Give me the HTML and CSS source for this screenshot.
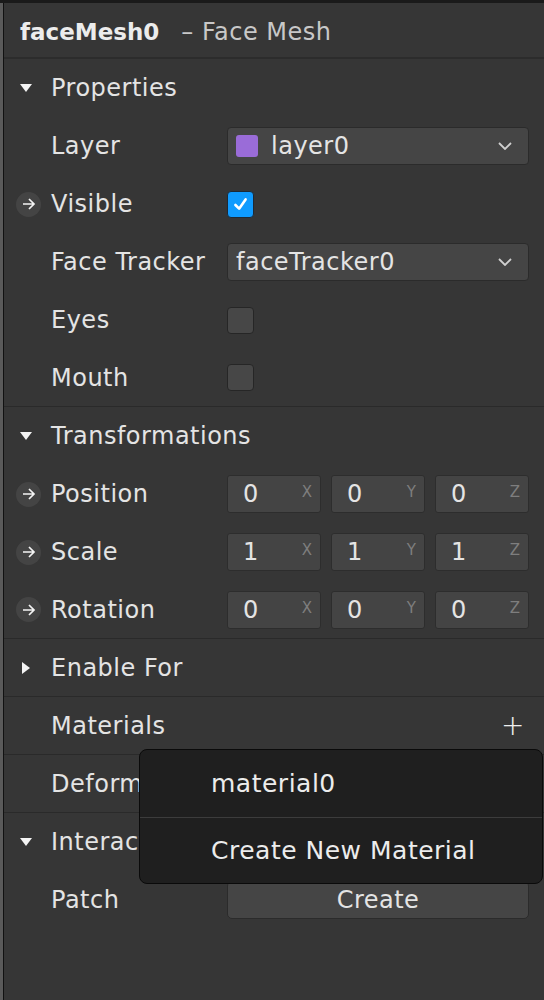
FILE: index.html
```html
<!DOCTYPE html>
<html lang="en">
  <head>
    <meta charset="UTF-8" />
    <meta name="viewport" content="width=device-width, initial-scale=1.0" />
    <title>Inspector</title>
    <link rel="stylesheet" href="styles.css">
  </head>
  <body>
    <!-- icons -->
    <svg display="none">
      <symbol id="chevron" viewBox="0 0 14 8">
        <path d="M1,1 L7,7 L13,1" fill="none" stroke="#d0d0d0" stroke-width="1.8"></path>
      </symbol>
      <symbol id="link-arrow" viewBox="0 0 14 12">
        <path d="M1,6 H12 M7,1 L12,6 L7,11" fill="none" stroke="#f4f4f4" stroke-width="1.7"></path>
      </symbol>
    </svg>

    <div class="frame">
      <div class="edge"></div>

      <div class="panel">
        <!-- header -->
        <div class="header">
          <span class="title">faceMesh0</span>
          <span class="subtitle">– Face Mesh</span>
        </div>

        <!-- Properties -->
        <div class="section">
          <div class="row">
            <div class="lead"><span class="tri tri-down"></span></div>
            <div class="label">Properties</div>
          </div>
          <div class="row">
            <div class="lead"></div>
            <div class="label">Layer</div>
            <div class="control select">
              <span class="swatch"></span>
              <span class="select-text">layer0</span>
              <svg class="chevron"><use href="#chevron"></use></svg>
            </div>
          </div>
          <div class="row">
            <div class="lead"><span class="link"><svg><use href="#link-arrow"></use></svg></span></div>
            <div class="label">Visible</div>
            <div class="control">
              <span class="check checked">
                <svg viewBox="0 0 27 27"><path d="M8,14 L12,18 L19,8" fill="none" stroke="#fff" stroke-width="2.8" stroke-linecap="round" stroke-linejoin="round"></path></svg>
              </span>
            </div>
          </div>
          <div class="row">
            <div class="lead"></div>
            <div class="label">Face Tracker</div>
            <div class="control select">
              <span class="select-text plain">faceTracker0</span>
              <svg class="chevron"><use href="#chevron"></use></svg>
            </div>
          </div>
          <div class="row">
            <div class="lead"></div>
            <div class="label">Eyes</div>
            <div class="control"><span class="check"></span></div>
          </div>
          <div class="row">
            <div class="lead"></div>
            <div class="label">Mouth</div>
            <div class="control"><span class="check"></span></div>
          </div>
        </div>

        <!-- Transformations -->
        <div class="section">
          <div class="row">
            <div class="lead"><span class="tri tri-down"></span></div>
            <div class="label">Transformations</div>
          </div>
          <div class="row">
            <div class="lead"><span class="link"><svg><use href="#link-arrow"></use></svg></span></div>
            <div class="label">Position</div>
            <div class="control vec">
              <div class="field"><span>0</span><i>X</i></div>
              <div class="field"><span>0</span><i>Y</i></div>
              <div class="field"><span>0</span><i>Z</i></div>
            </div>
          </div>
          <div class="row">
            <div class="lead"><span class="link"><svg><use href="#link-arrow"></use></svg></span></div>
            <div class="label">Scale</div>
            <div class="control vec">
              <div class="field"><span>1</span><i>X</i></div>
              <div class="field"><span>1</span><i>Y</i></div>
              <div class="field"><span>1</span><i>Z</i></div>
            </div>
          </div>
          <div class="row">
            <div class="lead"><span class="link"><svg><use href="#link-arrow"></use></svg></span></div>
            <div class="label">Rotation</div>
            <div class="control vec">
              <div class="field"><span>0</span><i>X</i></div>
              <div class="field"><span>0</span><i>Y</i></div>
              <div class="field"><span>0</span><i>Z</i></div>
            </div>
          </div>
        </div>

        <div class="section">
          <div class="row">
            <div class="lead"><span class="tri tri-right"></span></div>
            <div class="label">Enable For</div>
          </div>
        </div>

        <div class="section">
          <div class="row">
            <div class="lead"></div>
            <div class="label">Materials</div>
            <div class="plus">+</div>
          </div>
        </div>

        <div class="section">
          <div class="row">
            <div class="lead"></div>
            <div class="label">Deformation</div>
          </div>
        </div>

        <div class="section last">
          <div class="row">
            <div class="lead"><span class="tri tri-down"></span></div>
            <div class="label">Interactions</div>
          </div>
          <div class="row">
            <div class="lead"></div>
            <div class="label">Patch</div>
            <div class="control button">Create</div>
          </div>
        </div>

        <!-- 菜单 -->
        <div class="menu">
          <div class="menu-item first">material0</div>
          <div class="menu-item">Create New Material</div>
        </div>
      </div>
    </div>
  </body>
</html>
```

FILE: styles.css
```css
body {
  margin: 0;
  padding: 0;
  background-color: #363636;
  color: #e4e4e4;
  font: 24px/1 'DejaVu Sans', 'Open Sans', sans-serif;
  letter-spacing: 0.5px;
}

.frame {
  display: flex;
  min-height: 1000px;
  border-top: 3px solid #1a1a1a;
  box-sizing: border-box;
}

.edge {
  width: 3px;
  background-color: #5a5a5a;
}

.panel {
  flex: 1;
  position: relative;
  border-left: 1px solid #111;
  background-color: #363636;
}

.header {
  height: 50px;
  padding-top: 4px;
  display: flex;
  align-items: center;
  padding-left: 16px;
  border-bottom: 2px solid #2c2c2c;
}

.title {
  font-size: 23px;
  font-weight: bold;
  letter-spacing: 0;
  color: #ececec;
}

.subtitle {
  margin-left: 22px;
  color: #c8c8c8;
}

.section {
  border-bottom: 1px solid #2a2a2a;
}

.section.last {
  border-bottom: none;
}

.row {
  height: 58px;
  display: flex;
  align-items: center;
  padding-right: 15px;
}

.section .row:last-child {
  height: 57px;
}

.section.last .row:last-child {
  height: 58px;
}

.lead {
  width: 47px;
  display: flex;
  align-items: center;
  padding-left: 12px;
  box-sizing: border-box;
}

.label {
  width: 176px;
  white-space: nowrap;
}

.control {
  flex: 1;
  height: 38px;
  display: flex;
  align-items: center;
}

/* 三角 */
.tri {
  width: 0;
  height: 0;
  margin-left: 4px;
}

.tri-down {
  border-left: 6px solid transparent;
  border-right: 6px solid transparent;
  border-top: 8px solid #f4f4f4;
}

.tri-right {
  margin-left: 6px;
  border-top: 6px solid transparent;
  border-bottom: 6px solid transparent;
  border-left: 8px solid #f4f4f4;
}

.link {
  width: 25px;
  height: 25px;
  border-radius: 50%;
  background-color: #444;
  display: flex;
  align-items: center;
  justify-content: center;
}

.link svg {
  width: 14px;
  height: 12px;
}

/* 下拉 */
.select {
  background-color: #454545;
  border: 1px solid #2b2b2b;
  border-radius: 4px;
  box-sizing: border-box;
  padding: 0 16px 0 8px;
}

.swatch {
  width: 22px;
  height: 22px;
  border-radius: 3px;
  background-color: #9a6cd8;
  margin-right: 13px;
}

.select-text {
  flex: 1;
}

.chevron {
  width: 14px;
  height: 8px;
}

/* 复选框 */
.check {
  width: 27px;
  height: 27px;
  border-radius: 4px;
  background-color: #474747;
  border: 1px solid #262626;
  box-sizing: border-box;
  display: block;
}

.check.checked {
  background-color: #0f9bff;
  border-color: #1d2a36;
}

.check svg {
  display: block;
  width: 25px;
  height: 25px;
}

/* 向量 */
.vec {
  gap: 10px;
}

.field {
  flex: 1;
  height: 38px;
  display: flex;
  align-items: center;
  justify-content: space-between;
  background-color: #444;
  border: 1px solid #2d2d2d;
  border-radius: 3px;
  box-sizing: border-box;
  padding: 0 8px 0 15px;
}

.field i {
  font-style: normal;
  font-size: 15px;
  letter-spacing: 0;
  color: #7e7e7e;
  margin-top: -3px;
}

.plus {
  margin-left: auto;
  font-size: 28px;
  font-weight: 200;
  color: #eee;
  margin-right: 4px;
}

.button {
  justify-content: center;
  background-color: #454545;
  border: 1px solid #2b2b2b;
  border-radius: 5px;
  box-sizing: border-box;
}

/* 弹出菜单 */
.menu {
  position: absolute;
  left: 135px;
  top: 746px;
  width: 404px;
  background-color: #1f1f1f;
  border: 1px solid #0a0a0a;
  border-radius: 8px;
  box-sizing: border-box;
  font-size: 25px;
}

.menu-item {
  height: 65px;
  display: flex;
  align-items: center;
  padding-left: 71px;
  color: #ececec;
}

.menu-item.first {
  height: 67px;
}

.menu-item + .menu-item {
  border-top: 1px solid #3c3c3c;
}
```
